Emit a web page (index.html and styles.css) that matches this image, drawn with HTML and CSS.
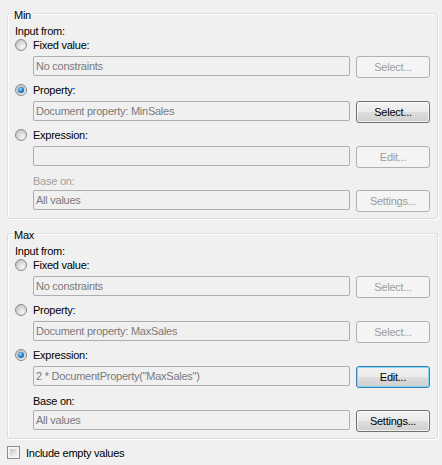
FILE: index.html
```html
<!DOCTYPE html>
<html>
<head>
<meta charset="utf-8">
<link rel="stylesheet" href="styles.css">
</head>
<body>
<div class="page">
  <div class="group">
    <div class="legend">Min</div>
    <div class="label">Input from:</div>
    <div class="opt"><span class="radio"></span><span class="opt-text">Fixed value:</span></div>
    <div class="field"><div class="tb">No constraints</div><div class="btn disabled">Select...</div></div>
    <div class="opt gap"><span class="radio checked"></span><span class="opt-text">Property:</span></div>
    <div class="field"><div class="tb">Document property: MinSales</div><div class="btn">Select...</div></div>
    <div class="opt gap"><span class="radio"></span><span class="opt-text">Expression:</span></div>
    <div class="field"><div class="tb"></div><div class="btn disabled">Edit...</div></div>
    <div class="sublabel disabled-text">Base on:</div>
    <div class="field tight"><div class="tb">All values</div><div class="btn disabled">Settings...</div></div>
  </div>
  <div class="group second">
    <div class="legend">Max</div>
    <div class="label">Input from:</div>
    <div class="opt"><span class="radio"></span><span class="opt-text">Fixed value:</span></div>
    <div class="field"><div class="tb">No constraints</div><div class="btn disabled">Select...</div></div>
    <div class="opt gap"><span class="radio"></span><span class="opt-text">Property:</span></div>
    <div class="field"><div class="tb">Document property: MaxSales</div><div class="btn disabled">Select...</div></div>
    <div class="opt gap"><span class="radio checked"></span><span class="opt-text">Expression:</span></div>
    <div class="field"><div class="tb">2 * DocumentProperty("MaxSales")</div><div class="btn focused">Edit...</div></div>
    <div class="sublabel">Base on:</div>
    <div class="field tight"><div class="tb">All values</div><div class="btn">Settings...</div></div>
  </div>
  <div class="check-row"><span class="checkbox"></span><span class="check-text">Include empty values</span></div>
</div>
</body>
</html>
```
FILE: styles.css
```css
html, body {
  margin: 0;
  padding: 0;
  background: #f0f0f0;
}
body {
  font-family: "Liberation Sans", Arial, sans-serif;
  font-size: 11px;
  letter-spacing: -0.25px;
  color: #000;
  width: 442px;
  height: 465px;
  overflow: hidden;
}
.page {
  padding: 13px 4px 0 7px;
}
.group {
  border: 1px solid #d5dfe5;
  border-radius: 3px;
  box-shadow: inset 1px 1px 0 #fff, 1px 1px 0 #fff;
  padding: 0 7px 6px 7px;
}
.group.second {
  margin-top: 14px;
}
.legend {
  width: fit-content;
  height: 13px;
  line-height: 13px;
  margin: -5px 0 0 -2px;
  padding: 0 2px 0 1px;
  background: #f0f0f0;
}
.label {
  height: 13px;
  line-height: 13px;
  margin-top: 3px;
}
.opt {
  display: flex;
  align-items: flex-start;
  height: 13px;
  margin-top: 1px;
}
.opt.gap {
  margin-top: 6px;
}
.opt-text {
  line-height: 13px;
  margin-left: 6px;
}
.radio {
  position: relative;
  width: 12px;
  height: 12px;
  box-sizing: border-box;
  border-radius: 50%;
  border: 1px solid #8a8a8a;
  background: radial-gradient(circle at 65% 70%, #f6f6f6 0, #dcdcdc 45%, #b9b9b9 100%);
  flex: none;
}
.radio.checked::after {
  content: "";
  position: absolute;
  left: 2px;
  top: 2px;
  width: 6px;
  height: 6px;
  border-radius: 50%;
  background: radial-gradient(circle at 40% 35%, #9fe2ff 0, #2a86d0 45%, #0d3f75 100%);
  box-shadow: 0 0 1px #2f6493;
}
.field {
  display: flex;
  align-items: flex-start;
  gap: 6px;
  height: 22px;
  margin: 4px 0 0 18px;
}
.field.tight {
  margin-top: 2px;
}
.tb {
  flex: 1;
  height: 20px;
  box-sizing: border-box;
  border: 1px solid #afafaf;
  border-radius: 2px;
  line-height: 18px;
  padding-left: 2px;
  color: #7a7a7a;
  white-space: nowrap;
  overflow: hidden;
}
.btn {
  width: 74px;
  height: 22px;
  box-sizing: border-box;
  flex: none;
  border: 1px solid #707070;
  border-radius: 3px;
  line-height: 20px;
  text-align: center;
  color: #000;
  background: linear-gradient(#f2f2f2 0%, #ebebeb 48%, #dddddd 52%, #cfcfcf 100%);
  box-shadow: inset 0 0 0 1px rgba(255, 255, 255, 0.7);
}
.btn.disabled {
  border-color: #adb2b5;
  background: #f4f4f4;
  color: #9d9d9d;
  box-shadow: none;
}
.btn.focused {
  border-color: #3c7fb1;
  box-shadow: inset 0 0 0 1px #7ddcfb;
}
.sublabel {
  height: 13px;
  line-height: 13px;
  margin: 7px 0 0 18px;
}
.disabled-text {
  color: #a0a0a0;
}
.check-row {
  display: flex;
  align-items: flex-start;
  height: 13px;
  margin-top: 7px;
}
.checkbox {
  position: relative;
  width: 13px;
  height: 13px;
  box-sizing: border-box;
  border: 1px solid #8f8f8f;
  background: #f4f4f4;
  flex: none;
}
.checkbox::after {
  content: "";
  position: absolute;
  left: 2px;
  top: 2px;
  width: 7px;
  height: 7px;
  background: linear-gradient(135deg, #c4c4c4 0%, #e2e2e2 60%, #f2f2f2 100%);
}
.check-text {
  line-height: 13px;
  margin-left: 6px;
  margin-top: 1px;
}
```
